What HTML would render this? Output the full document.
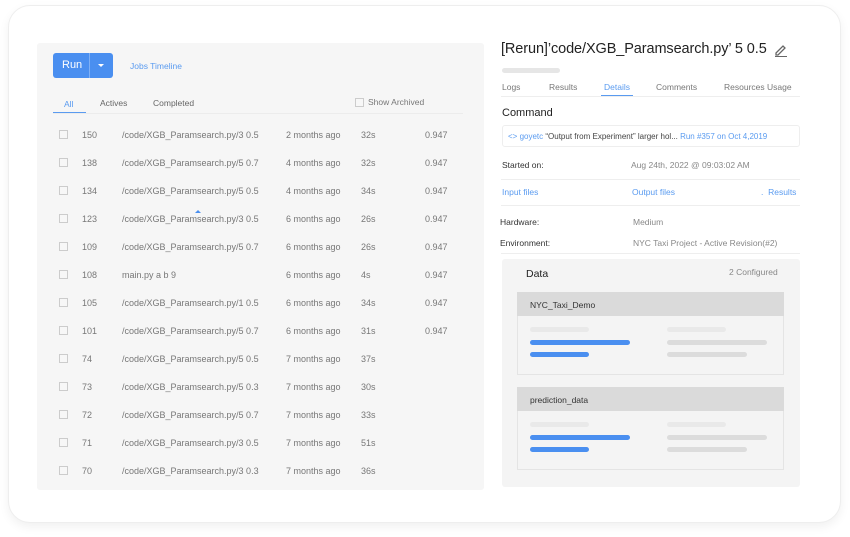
<!DOCTYPE html>
<html><head><style>
*{margin:0;padding:0;box-sizing:border-box}
body{width:850px;height:537px;background:#fff;font-family:"Liberation Sans",sans-serif;position:relative;overflow:hidden}
.card{position:absolute;left:8px;top:5px;width:833px;height:518px;border-radius:22px;background:#fff;border:1px solid #eee;box-shadow:0 4px 10px rgba(0,0,0,0.06)}
.a{position:absolute;white-space:nowrap}
.left{position:absolute;left:37px;top:43px;width:447px;height:447px;background:#f6f6f6;border-radius:3px}
.run{position:absolute;left:53px;top:53px;width:60px;height:25px;background:#4a8ff0;border-radius:3px;color:#fff;font-size:11px}
.cb{position:absolute;width:9px;height:9px;border:1px solid #ccc;background:#f7f7f7}
.row{font-size:9px;color:#777}
.lbl{font-size:8.5px;color:#333}
.val{font-size:8.5px;color:#888}
.blue{color:#5a9bf0}
.bar{position:absolute;height:5px;border-radius:3px}
</style></head><body>
<div class="card"></div>
<div class="left"></div>
<div class="run"><span class="a" style="left:9px;top:6px;line-height:13px">Run</span><div class="a" style="left:36px;top:0;width:1px;height:25px;background:#7fb0f5"></div><div class="a" style="left:45px;top:11px;border:3px solid transparent;border-top:3px solid #fff"></div></div>
<div class="a blue" style="left:130px;top:61px;font-size:8.5px">Jobs Timeline</div>
<div class="a blue" style="left:64px;top:99px;font-size:8.5px">All</div>
<div class="a" style="left:53px;top:112px;width:33px;height:1px;background:#5a9bf0"></div>
<div class="a" style="left:53px;top:113px;width:410px;height:1px;background:#ececec"></div>
<div class="a val" style="left:100px;top:98px;color:#666">Actives</div>
<div class="a val" style="left:153px;top:98px;color:#666">Completed</div>
<div class="cb" style="left:355px;top:98px"></div>
<div class="a val" style="left:368px;top:97px;color:#777">Show Archived</div>
<div class="a" style="left:195px;top:207px;border:3px solid transparent;border-bottom:3px solid #4a8ff0"></div>

<div class="row">
<div class="cb" style="left:59px;top:130px"></div><span class="a" style="left:82px;top:130px">150</span><span class="a" style="left:122px;top:130px">/code/XGB_Paramsearch.py/3 0.5</span><span class="a" style="left:286px;top:130px">2 months ago</span><span class="a" style="left:361px;top:130px">32s</span><span class="a" style="left:425px;top:130px">0.947</span>
<div class="cb" style="left:59px;top:158px"></div><span class="a" style="left:82px;top:158px">138</span><span class="a" style="left:122px;top:158px">/code/XGB_Paramsearch.py/5 0.7</span><span class="a" style="left:286px;top:158px">4 months ago</span><span class="a" style="left:361px;top:158px">32s</span><span class="a" style="left:425px;top:158px">0.947</span>
<div class="cb" style="left:59px;top:186px"></div><span class="a" style="left:82px;top:186px">134</span><span class="a" style="left:122px;top:186px">/code/XGB_Paramsearch.py/5 0.5</span><span class="a" style="left:286px;top:186px">4 months ago</span><span class="a" style="left:361px;top:186px">34s</span><span class="a" style="left:425px;top:186px">0.947</span>
<div class="cb" style="left:59px;top:214px"></div><span class="a" style="left:82px;top:214px">123</span><span class="a" style="left:122px;top:214px">/code/XGB_Paramsearch.py/3 0.5</span><span class="a" style="left:286px;top:214px">6 months ago</span><span class="a" style="left:361px;top:214px">26s</span><span class="a" style="left:425px;top:214px">0.947</span>
<div class="cb" style="left:59px;top:242px"></div><span class="a" style="left:82px;top:242px">109</span><span class="a" style="left:122px;top:242px">/code/XGB_Paramsearch.py/5 0.7</span><span class="a" style="left:286px;top:242px">6 months ago</span><span class="a" style="left:361px;top:242px">26s</span><span class="a" style="left:425px;top:242px">0.947</span>
<div class="cb" style="left:59px;top:270px"></div><span class="a" style="left:82px;top:270px">108</span><span class="a" style="left:122px;top:270px">main.py a b 9</span><span class="a" style="left:286px;top:270px">6 months ago</span><span class="a" style="left:361px;top:270px">4s</span><span class="a" style="left:425px;top:270px">0.947</span>
<div class="cb" style="left:59px;top:298px"></div><span class="a" style="left:82px;top:298px">105</span><span class="a" style="left:122px;top:298px">/code/XGB_Paramsearch.py/1 0.5</span><span class="a" style="left:286px;top:298px">6 months ago</span><span class="a" style="left:361px;top:298px">34s</span><span class="a" style="left:425px;top:298px">0.947</span>
<div class="cb" style="left:59px;top:326px"></div><span class="a" style="left:82px;top:326px">101</span><span class="a" style="left:122px;top:326px">/code/XGB_Paramsearch.py/5 0.7</span><span class="a" style="left:286px;top:326px">6 months ago</span><span class="a" style="left:361px;top:326px">31s</span><span class="a" style="left:425px;top:326px">0.947</span>
<div class="cb" style="left:59px;top:354px"></div><span class="a" style="left:82px;top:354px">74</span><span class="a" style="left:122px;top:354px">/code/XGB_Paramsearch.py/5 0.5</span><span class="a" style="left:286px;top:354px">7 months ago</span><span class="a" style="left:361px;top:354px">37s</span>
<div class="cb" style="left:59px;top:382px"></div><span class="a" style="left:82px;top:382px">73</span><span class="a" style="left:122px;top:382px">/code/XGB_Paramsearch.py/5 0.3</span><span class="a" style="left:286px;top:382px">7 months ago</span><span class="a" style="left:361px;top:382px">30s</span>
<div class="cb" style="left:59px;top:410px"></div><span class="a" style="left:82px;top:410px">72</span><span class="a" style="left:122px;top:410px">/code/XGB_Paramsearch.py/5 0.7</span><span class="a" style="left:286px;top:410px">7 months ago</span><span class="a" style="left:361px;top:410px">33s</span>
<div class="cb" style="left:59px;top:438px"></div><span class="a" style="left:82px;top:438px">71</span><span class="a" style="left:122px;top:438px">/code/XGB_Paramsearch.py/3 0.5</span><span class="a" style="left:286px;top:438px">7 months ago</span><span class="a" style="left:361px;top:438px">51s</span>
<div class="cb" style="left:59px;top:466px"></div><span class="a" style="left:82px;top:466px">70</span><span class="a" style="left:122px;top:466px">/code/XGB_Paramsearch.py/3 0.3</span><span class="a" style="left:286px;top:466px">7 months ago</span><span class="a" style="left:361px;top:466px">36s</span>
</div>

<div class="a" style="left:501px;top:41px;font-size:14.5px;letter-spacing:-0.1px;color:#222">[Rerun]’code/XGB_Paramsearch.py’ 5 0.5</div>
<svg class="a" style="left:774px;top:43px" width="14" height="14" viewBox="0 0 14 14"><path d="M2 10 L9 3 L11 5 L4 12 L2 12Z" fill="none" stroke="#666" stroke-width="1.3"/><path d="M1 13.5H13" stroke="#666"/></svg>
<div class="a" style="left:502px;top:68px;width:58px;height:5px;border-radius:3px;background:#e6e6e6"></div>
<div class="a val" style="left:502px;top:82px;color:#777">Logs</div>
<div class="a val" style="left:549px;top:82px;color:#777">Results</div>
<div class="a blue" style="left:604px;top:82px;font-size:8.5px">Details</div>
<div class="a" style="left:601px;top:95px;width:32px;height:1px;background:#5a9bf0"></div>
<div class="a val" style="left:656px;top:82px;color:#777">Comments</div>
<div class="a val" style="left:724px;top:82px;color:#777">Resources Usage</div>
<div class="a" style="left:501px;top:96px;width:299px;height:1px;background:#eee"></div>
<div class="a" style="left:502px;top:107px;font-size:11px;color:#222">Command</div>
<div class="a" style="left:502px;top:125px;width:298px;height:22px;border:1px solid #eee;border-radius:3px"></div>
<div class="a" style="left:508px;top:132px;font-size:8px;color:#444"><span class="blue">&lt;&gt; goyetc</span> “Output from Experiment” larger hol... <span class="blue">Run #357 on Oct 4,2019</span></div>
<div class="a lbl" style="left:502px;top:160px">Started on:</div>
<div class="a val" style="left:631px;top:160px">Aug 24th, 2022 @ 09:03:02 AM</div>
<div class="a" style="left:501px;top:179px;width:299px;height:1px;background:#eee"></div>
<div class="a blue" style="left:502px;top:187px;font-size:8.5px">Input files</div>
<div class="a blue" style="left:632px;top:187px;font-size:8.5px">Output files</div>
<div class="a blue" style="left:761px;top:187px;font-size:8.5px">.&nbsp;&nbsp;Results</div>
<div class="a" style="left:501px;top:205px;width:299px;height:1px;background:#eee"></div>
<div class="a lbl" style="left:500px;top:217px">Hardware:</div>
<div class="a val" style="left:633px;top:217px">Medium</div>
<div class="a lbl" style="left:500px;top:238px">Environment:</div>
<div class="a val" style="left:633px;top:238px">NYC Taxi Project - Active Revision(#2)</div>
<div class="a" style="left:501px;top:253px;width:299px;height:1px;background:#eee"></div>

<div class="a" style="left:502px;top:259px;width:298px;height:228px;background:#f4f4f4;border-radius:3px"></div>
<div class="a" style="left:526px;top:268px;font-size:10.5px;color:#222">Data</div>
<div class="a val" style="left:729px;top:267px">2 Configured</div>

<div class="a" style="left:517px;top:292px;width:267px;height:83px;border:1px solid #e4e4e4;background:#f4f4f4"></div>
<div class="a" style="left:517px;top:292px;width:267px;height:24px;background:#dadada"></div>
<div class="a lbl" style="left:530px;top:300px">NYC_Taxi_Demo</div>
<div class="bar" style="left:530px;top:327px;width:59px;background:#e9e9e9"></div>
<div class="bar" style="left:530px;top:340px;width:100px;background:#4a8ff0"></div>
<div class="bar" style="left:530px;top:352px;width:59px;background:#4a8ff0"></div>
<div class="bar" style="left:667px;top:327px;width:59px;background:#e9e9e9"></div>
<div class="bar" style="left:667px;top:340px;width:100px;background:#dcdcdc"></div>
<div class="bar" style="left:667px;top:352px;width:80px;background:#dcdcdc"></div>

<div class="a" style="left:517px;top:387px;width:267px;height:83px;border:1px solid #e4e4e4;background:#f4f4f4"></div>
<div class="a" style="left:517px;top:387px;width:267px;height:24px;background:#dadada"></div>
<div class="a lbl" style="left:530px;top:395px">prediction_data</div>
<div class="bar" style="left:530px;top:422px;width:59px;background:#e9e9e9"></div>
<div class="bar" style="left:530px;top:435px;width:100px;background:#4a8ff0"></div>
<div class="bar" style="left:530px;top:447px;width:59px;background:#4a8ff0"></div>
<div class="bar" style="left:667px;top:422px;width:59px;background:#e9e9e9"></div>
<div class="bar" style="left:667px;top:435px;width:100px;background:#dcdcdc"></div>
<div class="bar" style="left:667px;top:447px;width:80px;background:#dcdcdc"></div>
</body></html>
